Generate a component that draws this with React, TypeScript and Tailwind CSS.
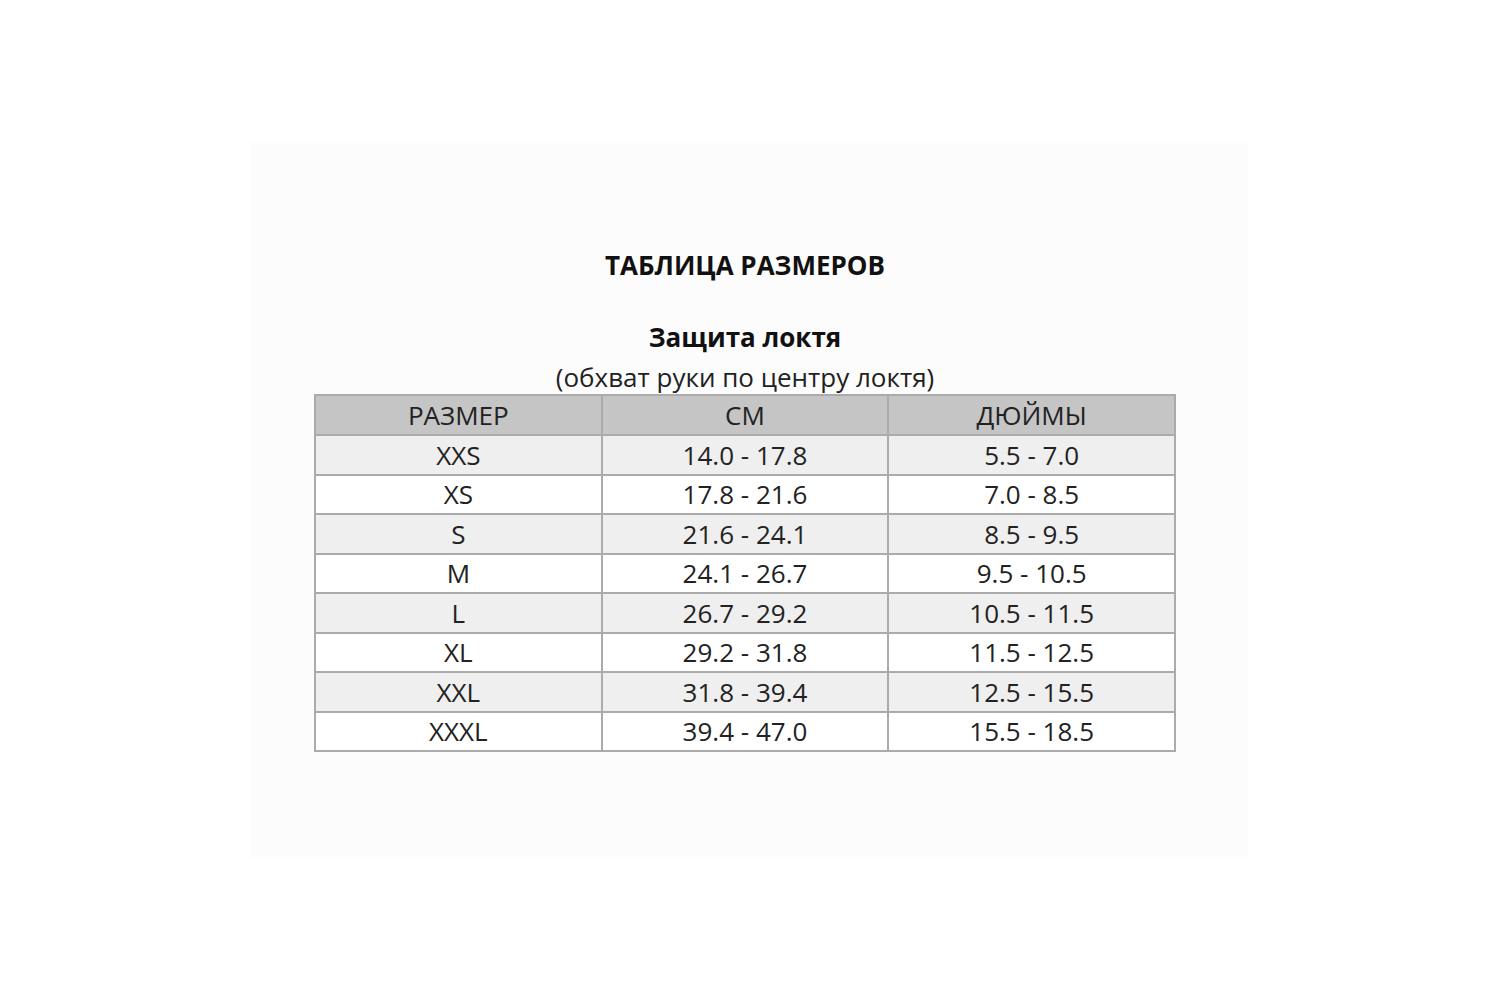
const rows = [
  ["XXS", "14.0 - 17.8", "5.5 - 7.0"],
  ["XS", "17.8 - 21.6", "7.0 - 8.5"],
  ["S", "21.6 - 24.1", "8.5 - 9.5"],
  ["M", "24.1 - 26.7", "9.5 - 10.5"],
  ["L", "26.7 - 29.2", "10.5 - 11.5"],
  ["XL", "29.2 - 31.8", "11.5 - 12.5"],
  ["XXL", "31.8 - 39.4", "12.5 - 15.5"],
  ["XXXL", "39.4 - 47.0", "15.5 - 18.5"],
];

export default function App() {
  return (
    <div className="min-h-[1000px] w-full bg-white pt-[143px] font-['Open_Sans',sans-serif] text-[#1a1a1a]">
      <div className="ml-[250px] h-[714px] w-[998px] bg-[#fcfcfc] pl-[64px] pt-[105px]">
        <div className="flex w-[862px] flex-col items-center">
          <h1 className="text-[26px] font-bold leading-[34px] text-[#111]">ТАБЛИЦА РАЗМЕРОВ</h1>
          <h2 className="mt-[38px] text-[26px] font-bold leading-[34px] text-[#111]">Защита локтя</h2>
          <p className="mt-[6px] text-[26px] leading-[34px] text-[#222]">(обхват руки по центру локтя)</p>
          <table className="mt-[0px] w-[862px] table-fixed border-collapse border-2 border-[#ababab] text-[26px] text-[#222]">
            <thead>
              <tr className="h-[40px] bg-[#c5c5c5]">
                <th className="border-2 border-[#ababab] p-0 font-normal leading-none">РАЗМЕР</th>
                <th className="border-2 border-[#ababab] p-0 font-normal leading-none">СМ</th>
                <th className="border-2 border-[#ababab] p-0 font-normal leading-none">ДЮЙМЫ</th>
              </tr>
            </thead>
            <tbody>
              {rows.map((r, i) => (
                <tr key={r[0]} className={i % 2 === 0 ? "h-[39.5px] bg-[#efefef]" : "h-[39.5px] bg-white"}>
                  {r.map((c, j) => (
                    <td key={j} className="border-2 border-[#ababab] p-0 text-center leading-none">
                      {c}
                    </td>
                  ))}
                </tr>
              ))}
            </tbody>
          </table>
        </div>
      </div>
    </div>
  );
}
